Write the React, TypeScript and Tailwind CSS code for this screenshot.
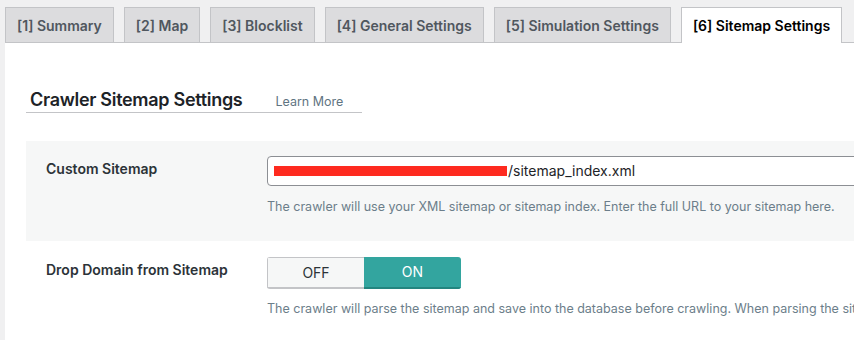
const tabs = [
  "[1] Summary",
  "[2] Map",
  "[3] Blocklist",
  "[4] General Settings",
  "[5] Simulation Settings",
  "[6] Sitemap Settings",
];

const Tabs = () => {
  return (
    <nav className="flex items-end gap-[10px] pl-[5px] pt-[7px]">
      {tabs.map((t, i) =>
        i === tabs.length - 1 ? (
          <div
            key={t}
            className="relative -mb-px flex h-[36px] shrink-0 items-center whitespace-nowrap border border-b-0 border-[#c3c4c7] bg-white px-[11px] text-[14px] font-semibold text-black"
          >
            {t}
          </div>
        ) : (
          <div
            key={t}
            className="flex h-[35px] shrink-0 items-center whitespace-nowrap border border-b-0 border-[#c3c4c7] bg-[#dcdcde] px-[11px] text-[14px] font-semibold text-[#50575e]"
          >
            {t}
          </div>
        )
      )}
    </nav>
  );
};

export default function App() {
  return (
    <div
      className="h-[340px] w-[854px] overflow-hidden bg-[#f0f0f1]"
      style={{ fontFamily: "Inter, 'Liberation Sans', sans-serif" }}
    >
      <Tabs />
      <main className="ml-[5px] h-full border-t border-[#c3c4c7] bg-white pl-[21px] pt-[46px]">
        <div className="flex w-[336px] items-baseline border-b border-[#c3c4c7] pl-[4px]">
          <h2 className="text-[18px] font-semibold leading-[22px] tracking-[-0.3px] text-[#1d2327]">Crawler Sitemap Settings</h2>
          <a className="ml-[33px] text-[12.5px] text-[#5f7482]">Learn More</a>
        </div>

        <div className="mt-[28px] w-[900px]">
          <div className="flex h-[100px] bg-[#f6f7f7] pt-[15px]">
            <div className="w-[241px] shrink-0 pl-[20px] pt-[2px] text-[14px] font-semibold text-[#2c3338]">
              Custom Sitemap
            </div>
            <div className="flex-1">
              <div className="flex h-[30px] items-center rounded-[4px] border border-[#8c8f94] bg-white pl-[6px] text-[14px] text-[#1d2327]">
                <span className="mr-px h-[10px] w-[233px] bg-[#fe2a1f]" />
                <span>/sitemap_index.xml</span>
              </div>
              <p className="mt-[12px] text-[12.5px] text-[#6c7e8a]">
                The crawler will use your XML sitemap or sitemap index. Enter the full URL to your sitemap here.
              </p>
            </div>
          </div>

          <div className="flex pt-[16px]">
            <div className="w-[241px] shrink-0 pl-[20px] pt-[2px] text-[14px] font-semibold text-[#2c3338]">
              Drop Domain from Sitemap
            </div>
            <div className="flex-1">
              <div className="flex h-[32px] w-[194px] overflow-hidden rounded-[3px] text-[14px]">
                <div className="flex w-[97px] items-center justify-center border border-r-0 border-b-2 border-[#c3c4c7] bg-[#f6f7f7] text-[#2c3338]">
                  OFF
                </div>
                <div className="flex w-[97px] items-center justify-center border-b-2 border-[#23857f] bg-[#33a59f] text-white">
                  ON
                </div>
              </div>
              <p className="mt-[11px] whitespace-nowrap text-[12.5px] text-[#6c7e8a]">
                The crawler will parse the sitemap and save into the database before crawling. When parsing the sitemap, drop the domain part.
              </p>
            </div>
          </div>
        </div>
      </main>
    </div>
  );
}
